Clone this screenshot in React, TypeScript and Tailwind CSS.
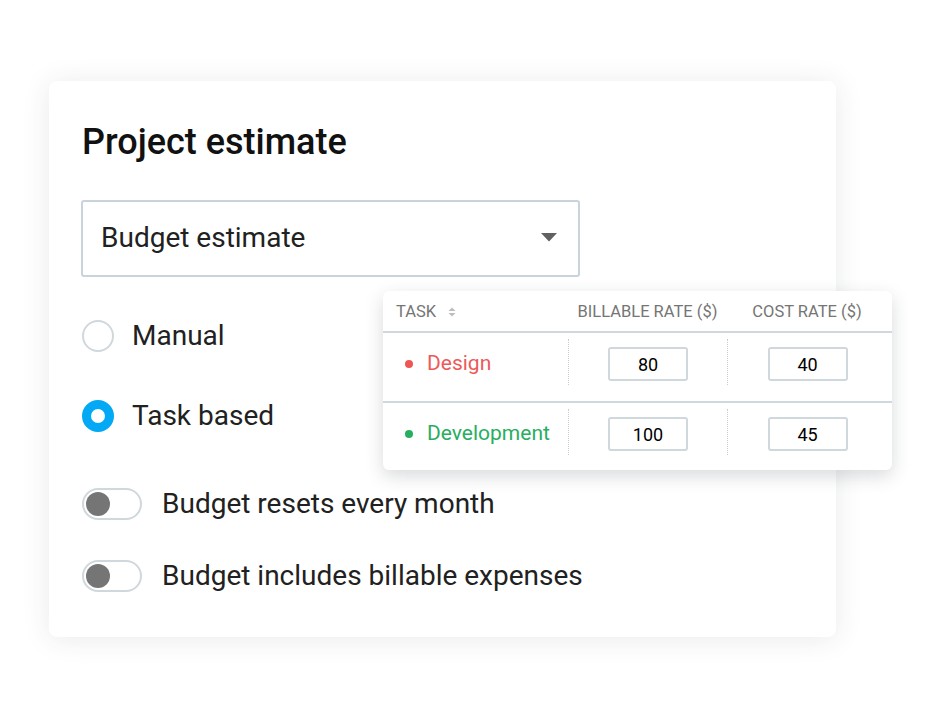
const font = { fontFamily: 'Roboto, "Liberation Sans", sans-serif' }

function Radio({ checked, label }: { checked?: boolean; label: string }) {
  return (
    <div className="flex h-[40px] items-center">
      {checked ? (
        <span className="box-border h-[32px] w-[32px] rounded-full border-[9px] border-[#03a9f4] bg-white" />
      ) : (
        <span className="box-border h-[32px] w-[32px] rounded-full border-2 border-[#cfd8dc] bg-white" />
      )}
      <span className="ml-[18px] text-[28px] text-[#212121]">{label}</span>
    </div>
  )
}

function Toggle({ label }: { label: string }) {
  return (
    <div className="flex h-[40px] items-center">
      <span className="box-border flex h-[32px] w-[60px] items-center rounded-full border-2 border-[#cfd8dc] bg-white pl-[2px]">
        <span className="h-[24px] w-[24px] rounded-full bg-[#757575]" />
      </span>
      <span className="ml-[20px] text-[28px] text-[#212121]">{label}</span>
    </div>
  )
}

function SortIcon() {
  return (
    <svg width="8" height="10" viewBox="0 0 8 10" className="ml-[12px]">
      <path d="M4 0.5 L7.5 4 H0.5 Z" fill="#bdbdbd" />
      <path d="M4 9.5 L7.5 6 H0.5 Z" fill="#bdbdbd" />
    </svg>
  )
}

const rows = [
  { name: 'Design', dot: 'bg-[#ee5555]', text: 'text-[#ec5a5a]', billable: '80', cost: '40' },
  { name: 'Development', dot: 'bg-[#27ae60]', text: 'text-[#27ae60]', billable: '100', cost: '45' },
]

function RateInput({ value }: { value: string }) {
  return (
    <div className="box-border flex h-[34px] w-[80px] items-center justify-center rounded-[3px] border-2 border-[#cfd8dc] text-[18px] text-black">
      {value}
    </div>
  )
}

function TaskTable() {
  return (
    <div className="absolute left-[334px] top-[210px] h-[179px] w-[509px] rounded-[6px] bg-white shadow-[0_6px_18px_rgba(40,50,60,0.18)]">
      <div className="grid h-[40px] grid-cols-[185px_159px_160px] items-center pt-[2px] text-[16.5px] uppercase text-[#757575]">
        <div className="flex items-center pl-[13px]">
          Task
          <SortIcon />
        </div>
        <div className="text-center">Billable rate ($)</div>
        <div className="text-center">Cost rate ($)</div>
      </div>
      {rows.map((row) => (
        <div
          key={row.name}
          className="grid h-[70px] grid-cols-[185px_159px_160px] border-t-2 border-[#cfd8dc] pt-[6px] pb-[16px]"
        >
          <div className="flex items-center pl-[22px] pt-[4px]">
            <span className={`h-[8px] w-[8px] rounded-full ${row.dot}`} />
            <span className={`ml-[14px] text-[21px] ${row.text}`}>{row.name}</span>
          </div>
          <div className="flex items-center justify-center border-l border-dotted border-[#cccccc] pt-[4px]">
            <RateInput value={row.billable} />
          </div>
          <div className="flex items-center justify-center border-l border-dotted border-[#cccccc] pt-[4px]">
            <RateInput value={row.cost} />
          </div>
        </div>
      ))}
    </div>
  )
}

export default function App() {
  return (
    <div className="min-h-[720px] w-[940px] bg-white pl-[49px] pt-[81px]" style={font}>
      <div className="relative box-border h-[556px] w-[787px] rounded-[8px] bg-white pl-[33px] pt-[40px] shadow-[0_2px_28px_rgba(40,50,60,0.10)]">
        <h1 className="text-[36px] font-medium leading-[42px] text-[#111111]">Project estimate</h1>
        <div className="-ml-px mt-[37px] box-border flex h-[77px] w-[499px] items-center justify-between rounded-[3px] border-2 border-[#c9d3dc] pb-[2px] pl-[18px] pr-[21px]">
          <span className="text-[28px] text-[#212121]">Budget estimate</span>
          <svg width="16" height="9" viewBox="0 0 16 9">
            <path d="M0 0 H16 L8 8.5 Z" fill="#616161" />
          </svg>
        </div>
        <div className="mt-[39px]">
          <Radio label="Manual" />
        </div>
        <div className="mt-[40px]">
          <Radio checked label="Task based" />
        </div>
        <div className="mt-[48px]">
          <Toggle label="Budget resets every month" />
        </div>
        <div className="mt-[32px]">
          <Toggle label="Budget includes billable expenses" />
        </div>
        <TaskTable />
      </div>
    </div>
  )
}
